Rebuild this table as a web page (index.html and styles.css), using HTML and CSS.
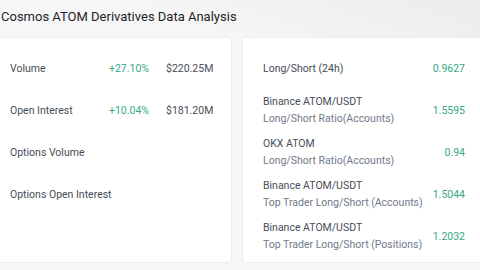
FILE: index.html
```html
<!DOCTYPE html>
<html>
<head>
<meta charset="utf-8">
<link rel="stylesheet" href="styles.css">
</head>
<body>
<div class="page">
  <h1 class="title">Cosmos ATOM Derivatives Data Analysis</h1>
  <div class="cards">
    <div class="card left">
      <div class="row"><span class="label">Volume</span><span class="pct">+27.10%</span><span class="amt">$220.25M</span></div>
      <div class="row"><span class="label">Open Interest</span><span class="pct">+10.04%</span><span class="amt">$181.20M</span></div>
      <div class="row"><span class="label">Options Volume</span><span class="pct"></span><span class="amt"></span></div>
      <div class="row"><span class="label">Options Open Interest</span><span class="pct"></span><span class="amt"></span></div>
    </div>
    <div class="card right">
      <div class="rrow"><div class="names"><div class="main">Long/Short (24h)</div></div><div class="val">0.9627</div></div>
      <div class="rrow"><div class="names"><div class="main">Binance ATOM/USDT</div><div class="sub">Long/Short Ratio(Accounts)</div></div><div class="val">1.5595</div></div>
      <div class="rrow"><div class="names"><div class="main">OKX ATOM</div><div class="sub">Long/Short Ratio(Accounts)</div></div><div class="val">0.94</div></div>
      <div class="rrow"><div class="names"><div class="main">Binance ATOM/USDT</div><div class="sub">Top Trader Long/Short (Accounts)</div></div><div class="val">1.5044</div></div>
      <div class="rrow"><div class="names"><div class="main">Binance ATOM/USDT</div><div class="sub">Top Trader Long/Short (Positions)</div></div><div class="val">1.2032</div></div>
    </div>
  </div>
</div>
</body>
</html>
```

FILE: styles.css
```css
html, body {
  margin: 0;
  padding: 0;
}
body {
  background: linear-gradient(200deg, #ececec 0%, #f6f6f6 30%, #f7f7f7 100%);
  width: 480px;
  height: 270px;
  overflow: hidden;
  font-family: "Roboto", "Noto Sans", sans-serif;
}
.page {
  display: flex;
  flex-direction: column;
}
.title {
  margin: 0;
  height: 37px;
  line-height: 34px;
  padding-left: 1px;
  font-family: "Roboto", "Noto Sans", sans-serif;
  font-size: 13px;
  font-weight: 400;
  color: #1e2329;
  white-space: nowrap;
}
.cards {
  display: grid;
  grid-template-columns: 232px 240px;
  column-gap: 10px;
  height: 226px;
}
.card {
  background: #fff;
  border: 1px solid #ededed;
  border-radius: 4px;
  box-sizing: border-box;
  padding-top: 9px;
}
.left {
  border-left: none;
  border-top-left-radius: 0;
  border-bottom-left-radius: 0;
  padding-left: 10px;
}
.row {
  display: grid;
  grid-template-columns: 99px 57px 1fr;
  height: 42px;
  align-items: center;
  font-size: 10.5px;
  white-space: nowrap;
}
.label {
  color: #474d57;
}
.pct {
  color: #35a985;
}
.amt {
  color: #474d57;
}
.right {
  padding-left: 20px;
  padding-right: 17px;
  border-right: none;
}
.rrow {
  display: flex;
  justify-content: space-between;
  align-items: center;
  height: 42px;
  font-size: 10.5px;
  white-space: nowrap;
}
.names {
  display: flex;
  flex-direction: column;
  line-height: 17px;
}
.main {
  color: #474d57;
}
.sub {
  color: #707a8a;
}
.val {
  color: #35a985;
}
```
